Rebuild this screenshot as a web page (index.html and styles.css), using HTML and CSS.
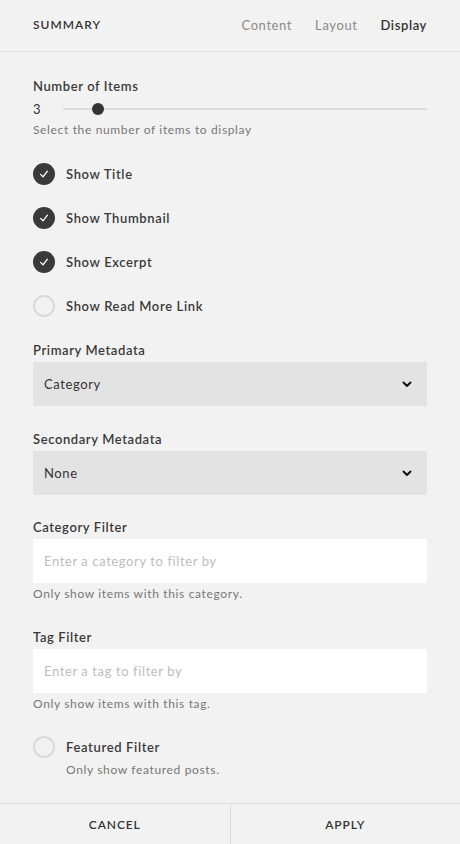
FILE: index.html
```html
<!DOCTYPE html>
<html>
<head>
<meta charset="utf-8">
<link rel="stylesheet" href="styles.css">
</head>
<body>
<div class="panel">
  <header class="topbar">
    <div class="title">SUMMARY</div>
    <nav class="tabs">
      <span class="tab">Content</span>
      <span class="tab">Layout</span>
      <span class="tab active">Display</span>
    </nav>
  </header>
  <main class="body">
    <div class="label">Number of Items</div>
    <div class="slider-row">
      <span class="slider-value">3</span>
      <div class="track"><span class="thumb"></span></div>
    </div>
    <div class="help help-slider">Select the number of items to display</div>

    <div class="checks">
      <div class="check"><span class="circle on"><svg viewBox="0 0 22 22" width="22" height="22"><path d="M7.6 11.4 L10 13.8 L14.4 8.2" fill="none" stroke="#fff" stroke-width="1.3" stroke-linecap="round" stroke-linejoin="round"/></svg></span><span class="check-label">Show Title</span></div>
      <div class="check"><span class="circle on"><svg viewBox="0 0 22 22" width="22" height="22"><path d="M7.6 11.4 L10 13.8 L14.4 8.2" fill="none" stroke="#fff" stroke-width="1.3" stroke-linecap="round" stroke-linejoin="round"/></svg></span><span class="check-label">Show Thumbnail</span></div>
      <div class="check"><span class="circle on"><svg viewBox="0 0 22 22" width="22" height="22"><path d="M7.6 11.4 L10 13.8 L14.4 8.2" fill="none" stroke="#fff" stroke-width="1.3" stroke-linecap="round" stroke-linejoin="round"/></svg></span><span class="check-label">Show Excerpt</span></div>
      <div class="check"><span class="circle"></span><span class="check-label">Show Read More Link</span></div>
    </div>

    <div class="field field-first">
      <div class="label">Primary Metadata</div>
      <div class="select"><span>Category</span><svg class="chev" viewBox="0 0 10 7" width="10" height="7"><path d="M1.5 1.5 L5 5 L8.5 1.5" fill="none" stroke="#111" stroke-width="2" stroke-linecap="round" stroke-linejoin="round"/></svg></div>
    </div>

    <div class="field">
      <div class="label">Secondary Metadata</div>
      <div class="select"><span>None</span><svg class="chev" viewBox="0 0 10 7" width="10" height="7"><path d="M1.5 1.5 L5 5 L8.5 1.5" fill="none" stroke="#111" stroke-width="2" stroke-linecap="round" stroke-linejoin="round"/></svg></div>
    </div>

    <div class="field field-input">
      <div class="label">Category Filter</div>
      <div class="input">Enter a category to filter by</div>
      <div class="help help-input">Only show items with this category.</div>
    </div>

    <div class="field field-tag">
      <div class="label">Tag Filter</div>
      <div class="input">Enter a tag to filter by</div>
      <div class="help help-input">Only show items with this tag.</div>
    </div>

    <div class="featured">
      <div class="check"><span class="circle"></span><span class="check-label">Featured Filter</span></div>
      <div class="help help-featured">Only show featured posts.</div>
    </div>
  </main>
  <footer class="footer">
    <div class="btn">CANCEL</div>
    <div class="btn btn-right">APPLY</div>
  </footer>
</div>
</body>
</html>
```

FILE: styles.css
```css
* { box-sizing: border-box; }
html, body { margin: 0; padding: 0; }
body {
  background: #f2f2f2;
  font-family: "Lato", "Open Sans", sans-serif;
  color: #333;
}
.panel {
  width: 460px;
  height: 844px;
  display: flex;
  flex-direction: column;
  background: #f2f2f2;
}
.topbar {
  height: 52px;
  border-bottom: 1px solid #dedede;
  padding: 0 33px 2px 33px;
  display: flex;
  align-items: center;
  justify-content: space-between;
}
.title {
  font-size: 12px;
  font-weight: 600;
  letter-spacing: 1px;
  color: #333;
}
.tabs { display: flex; gap: 23px; }
.tab {
  font-size: 13px;
  color: #8a8a8a;
  letter-spacing: 0.6px;
}
.tab.active { color: #333; font-weight: 600; }

.body {
  flex: 1;
  padding: 25px 33px 0 33px;
}
.label {
  font-size: 13px;
  font-weight: 600;
  letter-spacing: 0.6px;
  line-height: 18px;
  color: #3a3a3a;
}
.slider-row {
  margin-top: 5px;
  height: 18px;
  display: flex;
  align-items: center;
}
.slider-value {
  width: 30px;
  font-size: 13px;
  color: #333;
}
.track {
  flex: 1;
  height: 2px;
  background: #dcdcdc;
  position: relative;
}
.thumb {
  position: absolute;
  left: 29px;
  top: -5px;
  width: 12px;
  height: 12px;
  border-radius: 50%;
  background: #333;
}
.help {
  font-size: 12px;
  line-height: 16px;
  color: #777;
  letter-spacing: 0.65px;
}
.help-slider { margin-top: 4px; }

.checks {
  margin-top: 25px;
  display: flex;
  flex-direction: column;
  gap: 22px;
}
.check {
  display: flex;
  align-items: center;
  height: 22px;
}
.circle {
  width: 22px;
  height: 22px;
  border-radius: 50%;
  border: 2px solid #dadada;
  display: flex;
  align-items: center;
  justify-content: center;
  flex-shrink: 0;
}
.circle.on {
  background: #3a3a3a;
  border: none;
}
.check-label {
  margin-left: 11px;
  font-size: 13px;
  font-weight: 600;
  letter-spacing: 0.65px;
  color: #3a3a3a;
}

.field { margin-top: 24px; }
.field-first { margin-top: 24px; }
.field .label { margin-bottom: 3px; }
.select {
  height: 44px;
  background: #e3e3e3;
  padding: 0 15px 0 11px;
  display: flex;
  align-items: center;
  justify-content: space-between;
  font-size: 13px;
  letter-spacing: 0.6px;
  color: #333;
}
.chev { display: block; }
.field-input { margin-top: 23px; }
.field-tag { margin-top: 26px; }
.input {
  height: 44px;
  background: #fff;
  padding: 0 11px;
  display: flex;
  align-items: center;
  font-size: 13px;
  letter-spacing: 0.6px;
  color: #bdbdbd;
}
.help-input { margin-top: 3px; }

.featured { margin-top: 24px; }
.help-featured { margin-left: 33px; margin-top: 4px; }

.footer {
  height: 41px;
  border-top: 1px solid #dcdcdc;
  display: flex;
}
.btn {
  flex: 1;
  display: flex;
  align-items: center;
  justify-content: center;
  font-size: 12px;
  font-weight: 600;
  letter-spacing: 0.9px;
  color: #333;
}
.btn-right { border-left: 1px solid #dcdcdc; }
```
